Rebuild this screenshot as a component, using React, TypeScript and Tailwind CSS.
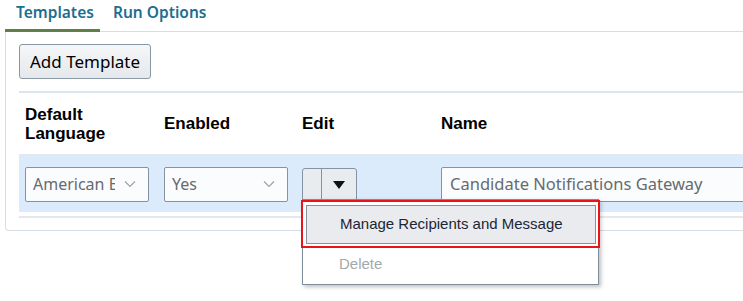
import React from 'react';

const uiFont = { fontFamily: '"Noto Sans", "Open Sans", sans-serif' };
const arial = { fontFamily: '"Liberation Sans", Arial, sans-serif' };

const Chevron = () => (
    <svg width="12" height="8" viewBox="0 0 12 8" className="flex-shrink-0">
        <path d="M1 1.5 L6 6.5 L11 1.5" fill="none" stroke="#9aa3ad" strokeWidth="1.2" />
    </svg>
);

const SelectBox: React.FC<{ value: string; width: string; textWidth: string }> = ({ value, width, textWidth }) => (
    <div className={`${width} h-[35px] flex items-center justify-between pl-[7px] pr-[12px] bg-[#fbfcfd] border border-[#8393a3] rounded-[2px]`}>
        <span className={`${textWidth} text-[16px] text-[#666b70] whitespace-nowrap overflow-hidden`} style={uiFont}>{value}</span>
        <Chevron />
    </div>
);

export default function App() {
    return (
        <div className="w-[743px] h-[301px] bg-white overflow-hidden relative">
            {/* tabs */}
            <div className="flex items-end pl-[5px] h-[32px]">
                <div className="w-[95px] h-[32px] flex items-start pt-[1px] pl-[11px] border-b-[3px] border-[#5f7f46]">
                    <span className="text-[15.5px] font-semibold text-[#1b6f8f]" style={uiFont}>Templates</span>
                </div>
                <div className="flex-1 h-[32px] flex items-start pt-[1px] pl-[13px] border-b border-[#d5dde5]">
                    <span className="text-[15.5px] font-semibold text-[#1b6f8f]" style={uiFont}>Run Options</span>
                </div>
            </div>

            {/* panel */}
            <div className="ml-[5px] w-[780px] h-[199px] border-l border-b border-[#d5dde5] rounded-bl-[4px] pl-[13px] pt-[12px]">
                <button className="h-[35px] px-[10px] border border-[#8a97a4] rounded-[3px] bg-gradient-to-b from-[#f4f6f8] to-[#e6e9ec] text-[17px] text-black" style={uiFont}>
                    Add Template
                </button>
                <div className="mt-[12px] border-t-2 border-[#dde4ea]" />

                {/* header */}
                <div className="flex h-[63px] border-b-2 border-[#e3e8ec] text-[17px] font-bold text-black" style={arial}>
                    <div className="w-[145px] pl-[6px] flex items-center leading-[19px]">Default<br />Language</div>
                    <div className="w-[138px] flex items-center">Enabled</div>
                    <div className="w-[139px] flex items-center">Edit</div>
                    <div className="flex-1 flex items-center">Name</div>
                </div>

                {/* row */}
                <div className="flex items-center h-[56px] bg-[#dcebfb]">
                    <div className="w-[145px] pl-[6px]">
                        <SelectBox value="American English" width="w-[124px]" textWidth="w-[82px]" />
                    </div>
                    <div className="w-[138px]">
                        <SelectBox value="Yes" width="w-[124px]" textWidth="w-[80px]" />
                    </div>
                    <div className="w-[139px]">
                        <div className="w-[55px] h-[34px] flex border border-[#8393a3] rounded-[3px] bg-[#e9ecef] mt-[1px]">
                            <div className="w-[19px] border-r border-[#8393a3]" />
                            <div className="flex-1 flex items-center justify-center">
                                <svg width="12" height="8" viewBox="0 0 12 8">
                                    <path d="M0 0 H12 L6 8 Z" fill="#111" />
                                </svg>
                            </div>
                        </div>
                    </div>
                    <div className="flex-1">
                        <div className="h-[35px] flex items-center pl-[8px] bg-[#fbfcfd] border border-[#8393a3] rounded-[2px]">
                            <span className="text-[16.5px] text-[#666b70] whitespace-nowrap" style={uiFont}>Candidate Notifications Gateway</span>
                        </div>
                    </div>
                </div>
                <div className="mt-[4px] border-t-2 border-[#e3e8ec]" />
            </div>

            {/* actions menu */}
            <div className="absolute left-[302px] top-[199px] w-[297px] h-[86px] bg-white border border-[#7d8d9c] shadow-[2px_2px_4px_rgba(0,0,0,0.25)]" style={arial}>
                <div className="absolute left-[-2px] top-0 w-[299px] h-[48px] border-2 border-[#e8141a]" />
                <div className="mt-[5px] h-[39px] mr-[2px] ml-[3px] flex items-center pl-[33px] bg-[#e9ebee] border border-[#8393a3] text-[15px] text-[#1c2636]">
                    Manage Recipients and Message
                </div>
                <div className="pl-[36px] pt-[9px] text-[15px] text-[#a4a8ad]">Delete</div>
            </div>
        </div>
    );
}
